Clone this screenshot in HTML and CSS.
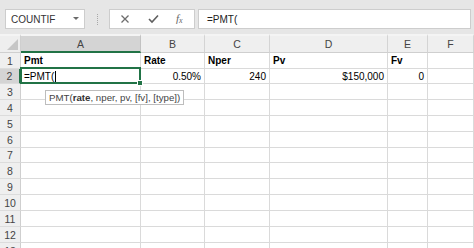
FILE: index.html
```html
<!DOCTYPE html>
<html>
<head>
<meta charset="utf-8">
<link rel="stylesheet" href="styles.css">
</head>
<body>
<div class="app">
  <div class="toolbar">
    <div class="namebox">
      <span class="nb-text">COUNTIF</span>
      <span class="nb-arrow"></span>
    </div>
    <div class="sep"></div>
    <div class="btns">
      <svg class="ic" width="10" height="10" viewBox="0 0 10 10"><path d="M1.5 1.5 L8.5 8.5 M8.5 1.5 L1.5 8.5" stroke="#6d6d6d" stroke-width="1.3" fill="none"/></svg>
      <svg class="ic" width="11" height="10" viewBox="0 0 11 10"><path d="M1 5 L4 8 L10 1.5" stroke="#5f5f5f" stroke-width="1.6" fill="none"/></svg>
      <span class="fx">f<sub>x</sub></span>
    </div>
    <div class="formula"><span>=PMT(</span></div>
  </div>
  <div class="sheet">
    <div class="corner"><span class="tri"></span></div>
    <div class="ch sel">A</div>
    <div class="ch">B</div>
    <div class="ch">C</div>
    <div class="ch">D</div>
    <div class="ch">E</div>
    <div class="ch">F</div>

    <div class="rh">1</div>
    <div class="c b">Pmt</div>
    <div class="c b">Rate</div>
    <div class="c b">Nper</div>
    <div class="c b">Pv</div>
    <div class="c b">Fv</div>
    <div class="c"></div>

    <div class="rh sel">2</div>
    <div class="c active">=PMT(<span class="caret"></span><span class="handle"></span></div>
    <div class="c r">0.50%</div>
    <div class="c r">240</div>
    <div class="c r">$150,000</div>
    <div class="c r">0</div>
    <div class="c"></div>

    <div class="rh">3</div><div class="c"></div><div class="c"></div><div class="c"></div><div class="c"></div><div class="c"></div><div class="c"></div>
    <div class="rh">4</div><div class="c"></div><div class="c"></div><div class="c"></div><div class="c"></div><div class="c"></div><div class="c"></div>
    <div class="rh">5</div><div class="c"></div><div class="c"></div><div class="c"></div><div class="c"></div><div class="c"></div><div class="c"></div>
    <div class="rh">6</div><div class="c"></div><div class="c"></div><div class="c"></div><div class="c"></div><div class="c"></div><div class="c"></div>
    <div class="rh">7</div><div class="c"></div><div class="c"></div><div class="c"></div><div class="c"></div><div class="c"></div><div class="c"></div>
    <div class="rh">8</div><div class="c"></div><div class="c"></div><div class="c"></div><div class="c"></div><div class="c"></div><div class="c"></div>
    <div class="rh">9</div><div class="c"></div><div class="c"></div><div class="c"></div><div class="c"></div><div class="c"></div><div class="c"></div>
    <div class="rh">10</div><div class="c"></div><div class="c"></div><div class="c"></div><div class="c"></div><div class="c"></div><div class="c"></div>
    <div class="rh">11</div><div class="c"></div><div class="c"></div><div class="c"></div><div class="c"></div><div class="c"></div><div class="c"></div>
    <div class="rh">12</div><div class="c"></div><div class="c"></div><div class="c"></div><div class="c"></div><div class="c"></div><div class="c"></div>
    <div class="rh">13</div><div class="c"></div><div class="c"></div><div class="c"></div><div class="c"></div><div class="c"></div><div class="c"></div>

    <div class="tip">PMT(<b>rate</b>, nper, pv, [fv], [type])</div>
  </div>
</div>
</body>
</html>
```

FILE: styles.css
```css
html, body {
  margin: 0;
  padding: 0;
  background: #ffffff;
}
body {
  width: 474px;
  height: 248px;
  overflow: hidden;
  font-family: "Liberation Sans", Arial, sans-serif;
}
.app {
  display: flex;
  flex-direction: column;
  width: 474px;
  height: 248px;
}
.toolbar {
  height: 34px;
  flex: none;
  background: #e6e6e6;
  display: flex;
  align-items: flex-start;
  padding: 9px 3px 0 5px;
  box-sizing: border-box;
}
.namebox {
  width: 80px;
  height: 20px;
  box-sizing: border-box;
  background: #fff;
  border: 1px solid #cdcdcd;
  display: flex;
  align-items: center;
  justify-content: space-between;
  padding: 0 5px 0 5px;
}
.nb-text {
  font-size: 10px;
  color: #333;
}
.nb-arrow {
  width: 0;
  height: 0;
  border-left: 3px solid transparent;
  border-right: 3px solid transparent;
  border-top: 3px solid #6a6a6a;
  margin-top: -2px;
}
.sep {
  width: 0;
  height: 11px;
  margin: 5px 11px 0 12px;
  border-left: 1px dotted #a8a8a8;
}
.btns {
  width: 86px;
  height: 20px;
  box-sizing: border-box;
  background: #fff;
  border: 1px solid #cdcdcd;
  display: flex;
  align-items: center;
  padding: 0 0 0 10px;
  gap: 0;
}
.btns .ic:nth-child(1) { margin-right: 18px; }
.btns .ic:nth-child(2) { margin-right: 17px; }
.fx {
  font-family: "Liberation Serif", serif;
  font-style: italic;
  font-size: 11px;
  color: #666;
  line-height: 1;
}
.fx sub {
  font-size: 8px;
  vertical-align: -1px;
}
.formula {
  flex: 1;
  height: 20px;
  margin-left: 3px;
  box-sizing: border-box;
  background: #fff;
  border: 1px solid #cdcdcd;
  display: flex;
  align-items: center;
  padding-left: 8px;
  font-size: 10px;
  color: #222;
}
.sheet {
  position: relative;
  flex: 1;
  display: grid;
  grid-template-columns: 21px 120px 64px 65px 118px 40px 1fr;
  grid-template-rows: 19px 16px 15px 16px 16px 16px 16px 15px 16px 16px 16px 16px 16px 16px;
  background: #fff;
}
.corner {
  position: relative;
  background: #eeeeee;
  border-top: 2px solid #f4f4f4;
  border-right: 1px solid #cfcfcf;
  border-bottom: 1px solid #cfcfcf;
  box-sizing: border-box;
}
.tri {
  position: absolute;
  right: 2px;
  bottom: 2px;
  width: 0;
  height: 0;
  border-left: 11px solid transparent;
  border-bottom: 11px solid #c6c6c6;
}
.ch {
  background: #efefef;
  border-top: 2px solid #f4f4f4;
  border-right: 1px solid #d4d4d4;
  border-bottom: 1px solid #cfcfcf;
  box-sizing: border-box;
  display: flex;
  align-items: center;
  justify-content: center;
  font-size: 10.5px;
  color: #444;
}
.ch.sel {
  background: #d4d4d4;
  border-bottom: 2px solid #217346;
  border-right: 1px solid #c2c2c2;
}
.rh {
  background: #efefef;
  border-right: 1px solid #cfcfcf;
  border-bottom: 1px solid #dcdcdc;
  box-sizing: border-box;
  display: flex;
  align-items: center;
  justify-content: center;
  font-size: 10.5px;
  color: #444;
}
.rh.sel {
  background: #d4d4d4;
  border-right: 2px solid #217346;
}
.c {
  border-right: 1px solid #dadada;
  border-bottom: 1px solid #dadada;
  box-sizing: border-box;
  display: flex;
  align-items: center;
  padding: 0 3px;
  font-size: 10px;
  color: #000;
  white-space: nowrap;
}
.c.b { font-weight: bold; }
.c.r { justify-content: flex-end; }
.c.active {
  position: relative;
  padding-left: 3px;
}
.c.active::after {
  content: "";
  position: absolute;
  left: -1px;
  top: -2px;
  right: -1px;
  bottom: -1px;
  border: 2px solid #217346;
}
.caret {
  display: inline-block;
  width: 1px;
  height: 11px;
  background: #000;
  margin-left: 1px;
}
.handle {
  position: absolute;
  right: -3px;
  bottom: -3px;
  width: 4px;
  height: 4px;
  background: #217346;
  border: 1px solid #fff;
  z-index: 2;
}
.tip {
  position: absolute;
  left: 45px;
  top: 56px;
  height: 15px;
  box-sizing: border-box;
  padding: 0 3px;
  background: #fff;
  border: 1px solid #bdbdbd;
  font-size: 9.7px;
  color: #444;
  display: flex;
  align-items: center;
  white-space: pre;
  z-index: 3;
}
.tip b { color: #333; }
```
